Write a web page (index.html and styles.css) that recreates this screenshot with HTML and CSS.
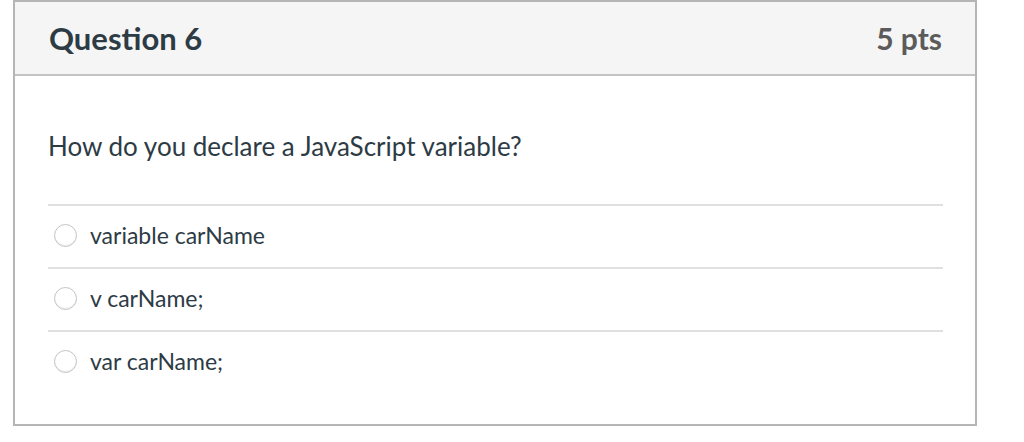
FILE: index.html
```html
<!DOCTYPE html>
<html lang="en">
<head>
    <meta charset="UTF-8">
    <meta name="viewport" content="width=device-width, initial-scale=1.0">
    <title>Question 6</title>
    <link rel="stylesheet" href="styles.css">
</head>
<body>
    <div class="question">
        <div class="question-header">
            <h2 class="question-title">Question 6</h2>
            <span class="question-points">5 pts</span>
        </div>
        <div class="question-body">
            <p class="question-text">How do you declare a JavaScript variable?</p>
            <div class="answers">
                <label class="answer"><span class="radio"></span>variable carName</label>
                <label class="answer"><span class="radio"></span>v carName;</label>
                <label class="answer"><span class="radio"></span>var carName;</label>
            </div>
        </div>
    </div>
</body>
</html>
```

FILE: styles.css
```css
body {
    font-family: Lato, 'Liberation Sans', sans-serif;
    background: #fff;
    margin: 0;
}

.question {
    width: 960px;
    height: 422px;
    margin-left: 13px;
    border: 2px solid #b5b5b5;
    box-sizing: content-box;
}

.question-header {
    height: 72px;
    background-color: #f5f5f5;
    border-bottom: 2px solid #c3c3c3;
    display: flex;
    justify-content: space-between;
    align-items: center;
    padding: 0 33px 0 34px;
}

.question-title {
    margin: 0;
    font-size: 31px;
    font-weight: 700;
    color: #2d3b45;
}

.question-points {
    font-size: 30px;
    font-weight: 700;
    color: #5b5b5b;
}

.question-body {
    padding: 0 32px 0 33px;
}

.question-text {
    margin: 0;
    padding: 54px 0 0;
    height: 74px;
    font-size: 26px;
    color: #2d3b45;
}

.answer {
    display: flex;
    align-items: center;
    height: 58px;
    padding-bottom: 3px;
    border-top: 2px solid #e0e0e0;
    font-size: 23px;
    color: #2d3b45;
}

.radio {
    width: 21px;
    height: 21px;
    border: 1px solid #c4c4c4;
    border-radius: 50%;
    box-shadow: inset 0 -1px 1px rgba(0, 0, 0, 0.08);
    margin: 0 13px 0 6px;
    background: #fff;
    flex-shrink: 0;
}
```
